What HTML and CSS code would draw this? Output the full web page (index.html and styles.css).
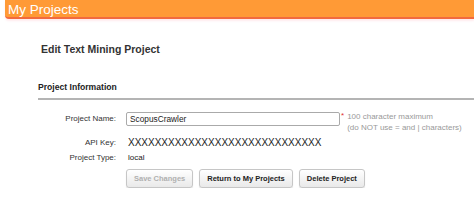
FILE: index.html
```html
<!DOCTYPE html>
<html lang="en">
<head>
    <meta charset="UTF-8">
    <title>My Projects</title>
    <link rel="stylesheet" href="styles.css">
</head>
<body>

<div class="header">My Projects</div>

<div class="content">
    <h2>Edit Text Mining Project</h2>

    <div class="section">
        <h3>Project Information</h3>

        <form id="projectForm" class="form">
            <div class="form-row row-name">
                <label for="projectName">Project Name:</label>
                <div class="field">
                    <input type="text" id="projectName" value="ScopusCrawler">
                    <span class="required">*</span>
                    <div class="note">100 character maximum<br>(do NOT use = and | characters)</div>
                </div>
            </div>

            <div class="form-row row-key">
                <label>API Key:</label>
                <div class="value api-key">XXXXXXXXXXXXXXXXXXXXXXXXXXXXX</div>
            </div>

            <div class="form-row row-type">
                <label>Project Type:</label>
                <div class="value">local</div>
            </div>

            <div class="button-row">
                <button type="submit" disabled>Save Changes</button>
                <button type="button">Return to My Projects</button>
                <button type="button">Delete Project</button>
            </div>
        </form>
    </div>
</div>

</body>
</html>
```

FILE: styles.css
```css
body {
    font-family: Arial, "Liberation Sans", sans-serif;
    background: white;
    color: #333;
    margin: 0;
}
.header {
    margin-left: 5px;
    height: 15px;
    padding: 2px 0 0 3px;
    line-height: 16px;
    font-size: 13.5px;
    color: white;
    background-color: #ff9a36;
    border-bottom: 2px solid #f26a3e;
    border-bottom-left-radius: 4px;
    box-shadow: 0 2px 2px rgba(255, 120, 140, 0.15);
}
.content {
    padding-top: 23px;
}
h2 {
    margin: 0 0 0 41px;
    font-size: 10.5px;
    line-height: 14px;
    color: #333;
}
.section {
    margin-top: 25px;
}
h3 {
    margin: 0 0 0 38px;
    padding-bottom: 5px;
    font-size: 8.6px;
    line-height: 12px;
    color: #222;
    border-bottom: 2px solid #b4b4b4;
}
.form {
    padding-left: 38px;
    font-size: 8px;
}
.form-row {
    display: flex;
    align-items: center;
}
.form-row label {
    width: 78px;
    margin-right: 10px;
    text-align: right;
    color: #333;
}
.row-name {
    margin-top: 12px;
    align-items: flex-start;
}
.row-name label {
    line-height: 14px;
}
.row-key {
    margin-top: 1px;
    height: 16px;
}
.row-type {
    margin-top: 2px;
    height: 10px;
}
.field {
    display: flex;
    align-items: flex-start;
}
input[type="text"] {
    width: 214px;
    height: 14px;
    margin: 0;
    padding: 0 3px;
    border: 1px solid #aaa;
    border-radius: 2px;
    box-sizing: border-box;
    font-family: Arial, "Liberation Sans", sans-serif;
    font-size: 8.3px;
    color: #222;
}
.required {
    color: #e03030;
    font-size: 8px;
    line-height: 10px;
    margin: -1px 3px 0 1px;
}
.note {
    margin-top: -1px;
    font-size: 8px;
    line-height: 11px;
    color: #999;
}
.value {
    padding-left: 2px;
    color: #222;
}
.api-key {
    font-size: 10px;
}
.button-row {
    display: flex;
    gap: 6px;
    margin: 7px 0 0 88px;
}
button {
    height: 19px;
    padding: 0 7px;
    font-family: Arial, "Liberation Sans", sans-serif;
    font-size: 7.5px;
    font-weight: bold;
    color: #222;
    background: linear-gradient(#ffffff, #e9e9e9);
    border: 1px solid #c6c6c6;
    border-radius: 3px;
    box-shadow: 0 1px 1px rgba(0, 0, 0, 0.12);
    cursor: pointer;
}
button:disabled {
    color: #b0b0b0;
    cursor: default;
}
```
